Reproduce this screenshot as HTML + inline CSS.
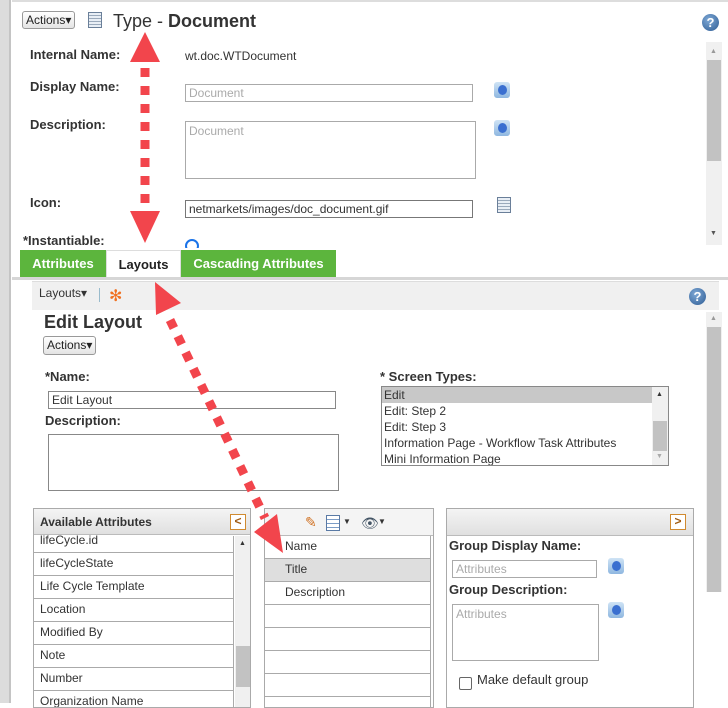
<!DOCTYPE html>
<html><head><meta charset="utf-8"><style>
*{box-sizing:border-box;margin:0;padding:0}
body{width:728px;height:703px;overflow:hidden;background:#fff;font-family:"Liberation Sans",Arial,sans-serif;color:#333;position:relative}
.a{position:absolute}
.lbl{position:absolute;font-weight:bold;font-size:13px;color:#333}
.inp{position:absolute;border:1px solid #aaa;background:#fff;font-size:12px;color:#aaa;padding:2px 3px}
.btn{position:absolute;border:1px solid #999;border-radius:3px;background:linear-gradient(#fff,#e4e4e4);font-size:12px;padding:1px 3px;color:#222}
.glob{position:absolute;width:16px;height:16px;border-radius:3px;background:linear-gradient(#cfe3f5,#8fb7e0);}
.glob:after{content:"";position:absolute;left:4px;top:3px;width:9px;height:10px;border-radius:50%;background:#3a6fd0}
.help{position:absolute;width:17px;height:17px;border-radius:50%;background:radial-gradient(circle at 40% 35%,#7fa9d6,#2d5b93);color:#fff;font-weight:bold;font-size:13px;text-align:center;line-height:17px}
.row{position:absolute;left:0;right:0;height:23px;border-bottom:1px solid #aaa;font-size:12px;padding:3px 6px;color:#333}
.hdr{position:absolute;background:linear-gradient(#f4f4f4,#e0e0e0);border-bottom:1px solid #bbb}
.col{position:absolute;width:16px;height:16px;border:1px solid #d08a30;background:#fff;color:#a05a10;font-size:12px;font-weight:bold;text-align:center;line-height:13px}
</style></head><body>
<div class="a" style="left:0;top:0;width:11px;height:703px;background:#dcdcdc;border-right:2px solid #c4c4c4"></div>
<div class="a" style="left:12px;top:0;width:716px;height:2px;background:#ddd"></div>
<div class="btn" style="left:22px;top:11px;height:18px;line-height:14px">Actions▾</div>
<div class="a" style="left:88px;top:12px;width:14px;height:16px;border:1px solid #6a7f99;background:repeating-linear-gradient(#e8eef5 0 2px,#9aa9bb 2px 3px)"></div>
<div class="a" style="left:113px;top:11px;font-size:18px;color:#333">Type - <b>Document</b></div>
<div class="help" style="left:702px;top:14px">?</div>
<div class="lbl" style="left:30px;top:47px">Internal Name:</div>
<div class="a" style="left:185px;top:49px;font-size:12px">wt.doc.WTDocument</div>
<div class="lbl" style="left:30px;top:79px">Display Name:</div>
<div class="inp" style="left:185px;top:84px;width:288px;height:18px;line-height:12px">Document</div>
<div class="lbl" style="left:30px;top:117px">Description:</div>
<div class="inp" style="left:185px;top:121px;width:291px;height:58px">Document</div>
<div class="lbl" style="left:30px;top:195px">Icon:</div>
<div class="inp" style="left:185px;top:200px;width:288px;height:18px;line-height:12px;color:#333;border-color:#777">netmarkets/images/doc_document.gif</div>
<div class="glob" style="left:494px;top:82px"></div>
<div class="glob" style="left:494px;top:120px"></div>
<div class="a" style="left:497px;top:197px;width:14px;height:16px;border:1px solid #6a7f99;background:repeating-linear-gradient(#e8eef5 0 2px,#9aa9bb 2px 3px)"></div>
<div class="lbl" style="left:23px;top:233px">*Instantiable:</div>
<div class="a" style="left:185px;top:239px;width:14px;height:14px;border-radius:50%;border:2px solid #1a73e8;background:#fff"></div>
<div class="a" style="left:706px;top:42px;width:16px;height:203px;background:#f0f0f0"><div class="a" style="left:1px;top:18px;width:14px;height:101px;background:#c2c2c2"></div><div class="a" style="left:4px;top:6px;font-size:7px;color:#999">▲</div><div class="a" style="left:4px;top:188px;font-size:7px;color:#555">▼</div></div>
<div class="a" style="left:12px;top:248px;width:716px;height:35px;background:#fff"></div>
<div class="a" style="left:20px;top:250px;width:86px;height:27px;background:#5cb53d;color:#fff;font-weight:bold;font-size:13px;text-align:center;line-height:27px">Attributes</div>
<div class="a" style="left:106px;top:250px;width:75px;height:28px;background:#fff;border:1px solid #ddd;border-bottom:none;color:#222;font-weight:bold;font-size:13px;text-align:center;line-height:27px">Layouts</div>
<div class="a" style="left:181px;top:250px;width:155px;height:27px;background:#5cb53d;color:#fff;font-weight:bold;font-size:13px;text-align:center;line-height:27px">Cascading Attributes</div>
<div class="a" style="left:12px;top:277px;width:716px;height:3px;background:#d6d6d6"></div>
<div class="a" style="left:32px;top:281px;width:687px;height:29px;background:#f0f0f0;border-top:1px solid #ddd"></div>
<div class="a" style="left:39px;top:286px;font-size:12px">Layouts▾</div>
<div class="a" style="left:99px;top:288px;width:1px;height:14px;background:#9bc"></div>
<div class="a" style="left:109px;top:286px;font-size:16px;color:#f07020">✻</div>
<div class="help" style="left:689px;top:288px">?</div>
<div class="a" style="left:706px;top:312px;width:16px;height:280px;background:#f0f0f0"><div class="a" style="left:1px;top:15px;width:14px;height:265px;background:#c2c2c2"></div><div class="a" style="left:4px;top:3px;font-size:7px;color:#999">▲</div></div>
<div class="a" style="left:44px;top:312px;font-size:18px;font-weight:bold;color:#333">Edit Layout</div>
<div class="btn" style="left:43px;top:336px;height:19px;line-height:14px">Actions▾</div>
<div class="lbl" style="left:45px;top:369px">*Name:</div>
<div class="inp" style="left:48px;top:391px;width:288px;height:18px;line-height:12px;color:#333;border-color:#888">Edit Layout</div>
<div class="lbl" style="left:45px;top:413px">Description:</div>
<div class="inp" style="left:48px;top:434px;width:291px;height:57px;border-color:#888"></div>
<div class="lbl" style="left:380px;top:369px">* Screen Types:</div>
<div class="a" style="left:381px;top:386px;width:288px;height:80px;border:1px solid #888;font-size:12px;line-height:16px;overflow:hidden">
<div style="background:#c8c8c8;padding-left:2px;width:270px">Edit</div><div style="padding-left:2px">Edit: Step 2</div><div style="padding-left:2px">Edit: Step 3</div><div style="padding-left:2px">Information Page - Workflow Task Attributes</div><div style="padding-left:2px">Mini Information Page</div>
<div class="a" style="left:270px;top:0;width:16px;height:78px;background:#f0f0f0"><div class="a" style="left:1px;top:34px;width:14px;height:30px;background:#c2c2c2"></div><div class="a" style="left:4px;top:0;font-size:7px">▲</div><div class="a" style="left:4px;top:62px;font-size:7px;color:#aaa">▼</div></div></div>
<div class="a" style="left:33px;top:508px;width:218px;height:200px;border:1px solid #aaa;overflow:hidden">
<div class="hdr" style="left:0;top:0;width:216px;height:26px;font-weight:bold;font-size:12px;padding:6px 6px">Available Attributes</div>
<div class="col" style="left:196px;top:5px">&lt;</div>
<div class="a" style="left:0;top:27px;width:200px;height:180px;border-right:1px solid #aaa">
<div class="row" style="top:-6px">lifeCycle.id</div><div class="row" style="top:17px">lifeCycleState</div><div class="row" style="top:40px">Life Cycle Template</div><div class="row" style="top:63px">Location</div><div class="row" style="top:86px">Modified By</div><div class="row" style="top:109px">Note</div><div class="row" style="top:132px">Number</div><div class="row" style="top:155px">Organization Name</div></div>
<div class="a" style="left:201px;top:27px;width:16px;height:180px;background:#f0f0f0"><div class="a" style="left:1px;top:110px;width:14px;height:41px;background:#c2c2c2"></div><div class="a" style="left:4px;top:4px;font-size:7px">▲</div></div></div>
<div class="a" style="left:264px;top:508px;width:170px;height:200px;border:1px solid #aaa;overflow:hidden">
<div class="hdr" style="left:0;top:0;width:170px;height:27px;background:#f4f4f4"></div>
<div class="a" style="left:40px;top:5px;font-size:14px;color:#d07020">✎</div>
<div class="a" style="left:61px;top:6px;width:14px;height:16px;border:1px solid #5a7aa5;background:repeating-linear-gradient(#fff 0 3px,#7b9cc6 3px 4px)"></div><div class="a" style="left:78px;top:8px;font-size:8px">▼</div>
<div class="a" style="left:96px;top:6px;font-size:14px;color:#456">👁</div><div class="a" style="left:113px;top:8px;font-size:8px">▼</div>
<div class="a" style="left:0;top:27px;width:166px;height:180px;border-right:1px solid #aaa">
<div class="row" style="top:0;padding-left:20px">Name</div><div class="row" style="top:23px;padding-left:20px;background:#dedede">Title</div><div class="row" style="top:46px;padding-left:20px">Description</div><div class="row" style="top:69px"></div><div class="row" style="top:92px"></div><div class="row" style="top:115px"></div><div class="row" style="top:138px"></div><div class="row" style="top:161px"></div></div></div>
<div class="a" style="left:446px;top:508px;width:248px;height:200px;border:1px solid #aaa">
<div class="hdr" style="left:0;top:0;width:246px;height:27px"></div>
<div class="col" style="left:223px;top:5px">&gt;</div></div>
<div class="lbl" style="left:449px;top:538px">Group Display Name:</div>
<div class="inp" style="left:452px;top:560px;width:145px;height:18px;line-height:12px">Attributes</div>
<div class="glob" style="left:608px;top:558px"></div>
<div class="lbl" style="left:449px;top:582px">Group Description:</div>
<div class="inp" style="left:452px;top:604px;width:147px;height:57px">Attributes</div>
<div class="glob" style="left:608px;top:602px"></div>
<div class="a" style="left:459px;top:677px;width:13px;height:13px;border:1px solid #666;border-radius:2px"></div>
<div class="a" style="left:477px;top:672px;font-size:13px">Make default group</div>
<svg class="a" style="left:0;top:0" width="728" height="703">
<g fill="#f2454c">
<polygon points="145,32 130,62 160,62"/>
<polygon points="145,243 130,211 160,211"/>
<line x1="145" y1="68" x2="145" y2="205" stroke="#f2454c" stroke-width="9" stroke-dasharray="9,9"/>
<polygon points="155,282 181,303 156,315"/>
<polygon points="254,532 283,553 277,514"/>
<line x1="170" y1="320" x2="265" y2="518" stroke="#f2454c" stroke-width="9" stroke-dasharray="9,9"/>
</g></svg>
</body></html>
